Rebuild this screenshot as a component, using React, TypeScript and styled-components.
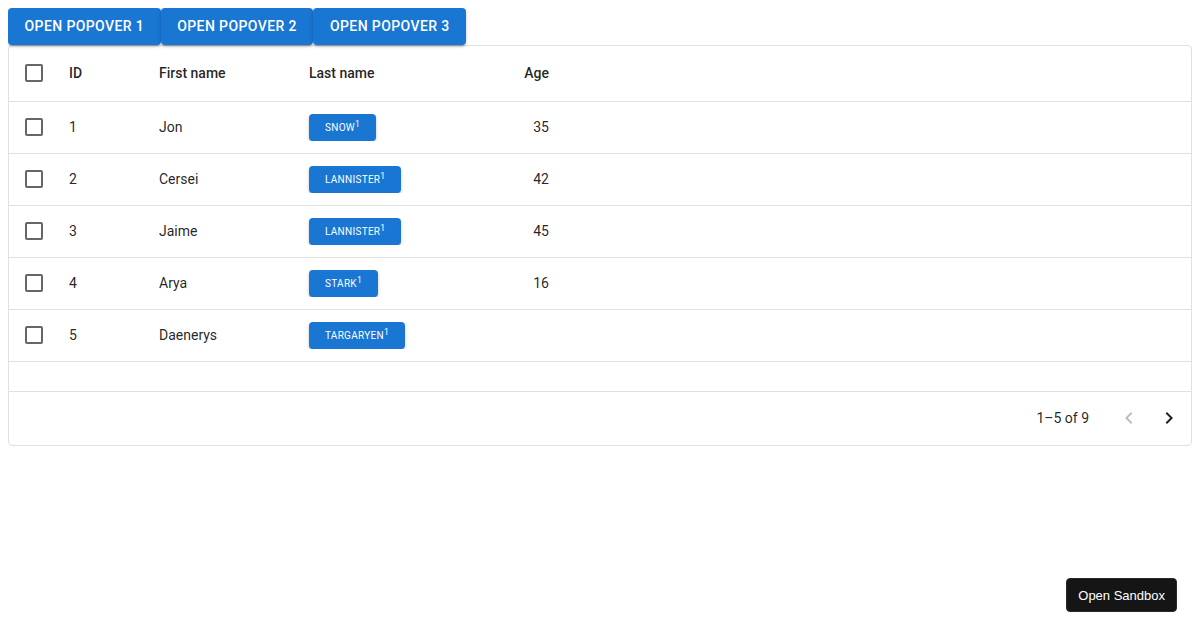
import React from 'react';
import styled, { createGlobalStyle } from 'styled-components';

const GlobalStyle = createGlobalStyle`
  body {
    margin: 8px;
    font-family: Roboto, "Helvetica", "Arial", sans-serif;
    color: rgba(0, 0, 0, 0.87);
    background: #fff;
  }
`;

const Toolbar = styled.div`
  display: flex;
`;

const ContainedButton = styled.button<{ $small?: boolean }>`
  display: inline-flex;
  align-items: center;
  justify-content: center;
  border: 0;
  margin: 0;
  cursor: pointer;
  background-color: #1976d2;
  color: #fff;
  font-family: Roboto, "Helvetica", "Arial", sans-serif;
  font-weight: ${(p) => (p.$small ? 400 : 500)};
  text-transform: uppercase;
  letter-spacing: 0.02857em;
  border-radius: 4px;
  box-shadow: 0px 3px 1px -2px rgba(0, 0, 0, 0.2), 0px 2px 2px 0px rgba(0, 0, 0, 0.14),
    0px 1px 5px 0px rgba(0, 0, 0, 0.12);
  font-size: ${(p) => (p.$small ? '10px' : '14px')};
  line-height: ${(p) => (p.$small ? '15px' : '24.5px')};
  padding: ${(p) => (p.$small ? '6px 16px' : '6px 16.5px')};
  min-width: 64px;
  white-space: nowrap;

  sup {
    font-size: 8.5px;
    line-height: 0;
    position: relative;
    top: -3px;
    vertical-align: baseline;
    letter-spacing: 0;
  }
`;

const Grid = styled.div`
  border: 1px solid rgba(224, 224, 224, 1);
  border-radius: 4px;
  font-size: 14px;
`;

const Row = styled.div<{ $header?: boolean }>`
  display: flex;
  align-items: center;
  height: ${(p) => (p.$header ? '55px' : '51px')};
  border-bottom: 1px solid rgba(224, 224, 224, 1);
  font-weight: ${(p) => (p.$header ? 500 : 400)};
`;

const Cell = styled.div<{ $width: number; $right?: boolean }>`
  width: ${(p) => p.$width}px;
  box-sizing: border-box;
  padding: 0 10px;
  display: flex;
  align-items: center;
  justify-content: ${(p) => (p.$right ? 'flex-end' : 'flex-start')};
  overflow: hidden;
  white-space: nowrap;
`;

const CheckCell = styled.div`
  width: 50px;
  display: flex;
  justify-content: center;
  align-items: center;
`;

const CheckBox = styled.span`
  width: 18px;
  height: 18px;
  box-sizing: border-box;
  border: 2px solid rgba(0, 0, 0, 0.6);
  border-radius: 2px;
`;

const Filler = styled.div`
  height: 29px;
`;

const Footer = styled.div`
  display: flex;
  align-items: center;
  justify-content: flex-end;
  height: 53px;
  border-top: 1px solid rgba(224, 224, 224, 1);
  padding-right: 2px;
`;

const PageInfo = styled.span`
  font-size: 14px;
  margin-right: 20px;
`;

const IconButton = styled.button<{ $disabled?: boolean }>`
  width: 40px;
  height: 40px;
  border: 0;
  background: transparent;
  border-radius: 50%;
  padding: 8px;
  display: inline-flex;
  align-items: center;
  justify-content: center;
  color: ${(p) => (p.$disabled ? 'rgba(0, 0, 0, 0.26)' : 'rgba(0, 0, 0, 0.87)')};

  svg {
    width: 24px;
    height: 24px;
    fill: currentColor;
  }
`;

const SandboxButton = styled.button`
  position: fixed;
  right: 23px;
  bottom: 18px;
  height: 34px;
  padding: 0 11px;
  background: #151515;
  color: #fff;
  border: 1px solid #2a2a2a;
  border-radius: 4px;
  font-family: "Liberation Sans", Arial, sans-serif;
  font-size: 13px;
`;

const rows = [
  { id: 1, firstName: 'Jon', lastName: 'Snow', age: 35 },
  { id: 2, firstName: 'Cersei', lastName: 'Lannister', age: 42 },
  { id: 3, firstName: 'Jaime', lastName: 'Lannister', age: 45 },
  { id: 4, firstName: 'Arya', lastName: 'Stark', age: 16 },
  { id: 5, firstName: 'Daenerys', lastName: 'Targaryen', age: null },
];

const App = () => {
  return (
    <>
      <GlobalStyle />
      <Toolbar>
        <ContainedButton>Open Popover 1</ContainedButton>
        <ContainedButton>Open Popover 2</ContainedButton>
        <ContainedButton>Open Popover 3</ContainedButton>
      </Toolbar>
      <Grid>
        <Row $header>
          <CheckCell>
            <CheckBox />
          </CheckCell>
          <Cell $width={90}>ID</Cell>
          <Cell $width={150}>First name</Cell>
          <Cell $width={150}>Last name</Cell>
          <Cell $width={110} $right>
            Age
          </Cell>
        </Row>
        {rows.map((row) => (
          <Row key={row.id}>
            <CheckCell>
              <CheckBox />
            </CheckCell>
            <Cell $width={90}>{row.id}</Cell>
            <Cell $width={150}>{row.firstName}</Cell>
            <Cell $width={150}>
              <ContainedButton $small>
                {row.lastName}
                <sup>1</sup>
              </ContainedButton>
            </Cell>
            <Cell $width={110} $right>
              {row.age ?? ''}
            </Cell>
          </Row>
        ))}
        <Filler />
        <Footer>
          <PageInfo>1–5 of 9</PageInfo>
          <IconButton $disabled>
            <svg viewBox="0 0 24 24">
              <path d="M15.41 16.59 10.83 12l4.58-4.59L14 6l-6 6 6 6 1.41-1.41z" />
            </svg>
          </IconButton>
          <IconButton>
            <svg viewBox="0 0 24 24">
              <path d="M8.59 16.59 13.17 12 8.59 7.41 10 6l6 6-6 6-1.41-1.41z" />
            </svg>
          </IconButton>
        </Footer>
      </Grid>
      <SandboxButton>Open Sandbox</SandboxButton>
    </>
  );
};

export default App;
